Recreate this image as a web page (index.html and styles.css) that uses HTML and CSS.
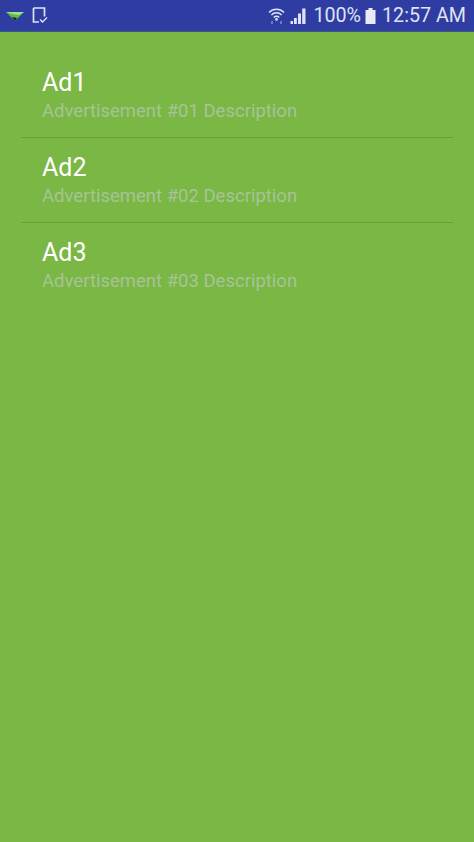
FILE: index.html
```html
<!DOCTYPE html>
<html lang="en">
<head>
    <meta charset="UTF-8">
    <meta name="viewport" content="width=device-width, initial-scale=1.0">
    <title>Ads</title>
    <link rel="stylesheet" href="styles.css">
</head>
<body>
    <header class="status-bar">
        <div class="status-left">
            <svg class="icon-app" width="18" height="12" viewBox="0 0 18 12">
                <polygon points="0,2 18,2 9,11" fill="#5fb84a"/>
                <polygon points="0,2 18,2 13,5 6,4" fill="#a5dc8c"/>
                <polygon points="6,7 9,11 11,8" fill="#16233f"/>
            </svg>
            <svg class="icon-note" width="16" height="17" viewBox="0 0 16 17">
                <path d="M1.500 1h11v8.500M1.500 1v14h5.500" fill="none" stroke="#dfe3f3" stroke-width="1.7"/>
                <path d="M8 12.500l2.500 2.500L15 10.500" fill="none" stroke="#dfe3f3" stroke-width="1.4"/>
            </svg>
        </div>
        <div class="status-right">
            <svg class="icon-wifi" width="17" height="18" viewBox="0 0 17 18">
                <path d="M1 5.500a10.500 10.500 0 0 1 15 0M3.400 8a7 7 0 0 1 10.200 0M5.800 10.400a3.600 3.600 0 0 1 5.400 0" fill="none" stroke="#dfe3f3" stroke-width="1.5"/>
                <circle cx="8.500" cy="12.400" r="1.300" fill="#dfe3f3"/>
                <path d="M4 14v3M13 14v3" stroke="#9aa5d0" stroke-width="1.200"/>
            </svg>
            <svg class="icon-signal" width="16" height="16" viewBox="0 0 16 16">
                <rect x="0.500" y="13" width="2.500" height="3" fill="#dfe3f3"/>
                <rect x="4" y="10" width="2.800" height="6" fill="#dfe3f3"/>
                <rect x="8" y="5.500" width="3" height="10.500" fill="#dfe3f3"/>
                <rect x="12.200" y="0.500" width="3.300" height="15.500" fill="#dfe3f3"/>
            </svg>
            <span class="battery-text">100%</span>
            <svg class="icon-battery" width="11" height="16" viewBox="0 0 11 16">
                <path d="M3.500 0h4v2h3v14H.5V2h3z" fill="#e8ebf6"/>
            </svg>
            <span class="clock">12:57 AM</span>
        </div>
    </header>

    <ul class="ad-list">
        <li class="ad-item">
            <h2>Ad1</h2>
            <p>Advertisement #01 Description</p>
        </li>
        <li class="ad-item">
            <h2>Ad2</h2>
            <p>Advertisement #02 Description</p>
        </li>
        <li class="ad-item">
            <h2>Ad3</h2>
            <p>Advertisement #03 Description</p>
        </li>
    </ul>
</body>
</html>
```
FILE: styles.css
```css
html, body {
    height: 100%;
}
body {
    font-family: Roboto, "Liberation Sans", sans-serif;
    margin: 0;
    padding: 0;
    background-color: #7ab744;
    overflow: hidden;
}
.status-bar {
    height: 31px;
    background: #2f3da3;
    color: #dfe3f3;
    display: flex;
    align-items: center;
    justify-content: space-between;
    padding: 0 8px 0 6px;
    border-bottom: 1px solid #3a5a86;
    box-sizing: content-box;
}
.status-left,
.status-right {
    display: flex;
    align-items: center;
}
.icon-note {
    margin-left: 8px;
}
.icon-signal {
    margin-left: 5px;
}
.battery-text {
    font-size: 19.700px;
    margin-left: 7px;
}
.icon-battery {
    margin-left: 4px;
}
.clock {
    font-size: 19.700px;
    margin-left: 6px;
}
.ad-list {
    list-style: none;
    margin: 21px 21px 0;
    padding: 0;
}
.ad-item {
    height: 85px;
    box-sizing: border-box;
    padding: 16px 0 0 21px;
    border-bottom: 1px solid #66a23f;
}
.ad-item:last-child {
    border-bottom: none;
}
.ad-item h2 {
    margin: 0;
    font-size: 25px;
    font-weight: 400;
    line-height: 28px;
    color: #ffffff;
}
.ad-item p {
    margin: 2px 0 0;
    font-size: 18.500px;
    line-height: 24px;
    color: #a6c498;
}
```
